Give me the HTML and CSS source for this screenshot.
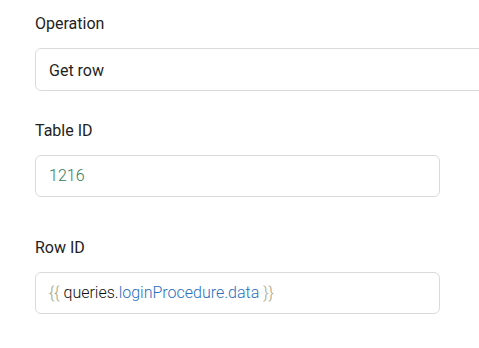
FILE: index.html
```html
<!DOCTYPE html>
<html lang="en">
	<head>
		<title>Query editor</title>
		<link rel="stylesheet" href="styles.css">
	</head>
	<body>
		<div id="form">
			<div class="field">
				<label class="label">Operation</label>
				<div class="input wide">Get row</div>
			</div>
			<div class="field spaced">
				<label class="label">Table ID</label>
				<div class="input code"><span class="num">1216</span></div>
			</div>
			<div class="field">
				<label class="label">Row ID</label>
				<div class="input code"><span class="brace">{{</span> queries.<span class="ref">loginProcedure.data</span> <span class="brace">}}</span></div>
			</div>
		</div>
	</body>
</html>
```

FILE: styles.css
```css
body, html {margin:0;padding:0;font-family:Roboto,"Liberation Sans",sans-serif;color:#1f1f1f;background:#fff;}
#form {padding:14px 0 0 35px;overflow:hidden;}
.field {margin-bottom:30px;}
.field.spaced {margin-bottom:41px;}
.label {display:block;font-size:16px;line-height:20px;margin-bottom:14px;color:#222;}
.input {box-sizing:border-box;width:405px;height:42px;padding:0 13px;border:1px solid #dadada;border-radius:6px;font-size:16px;line-height:40px;color:#1f1f1f;white-space:nowrap;}
.input.wide {width:460px;margin-right:-30px;height:43px;padding-top:2px;line-height:39px;}
.input.code {font-weight:300;color:#111;}
.num {color:#377a5c;}
.brace {color:#a3a384;}
.ref {color:#2a6fc2;}
```
